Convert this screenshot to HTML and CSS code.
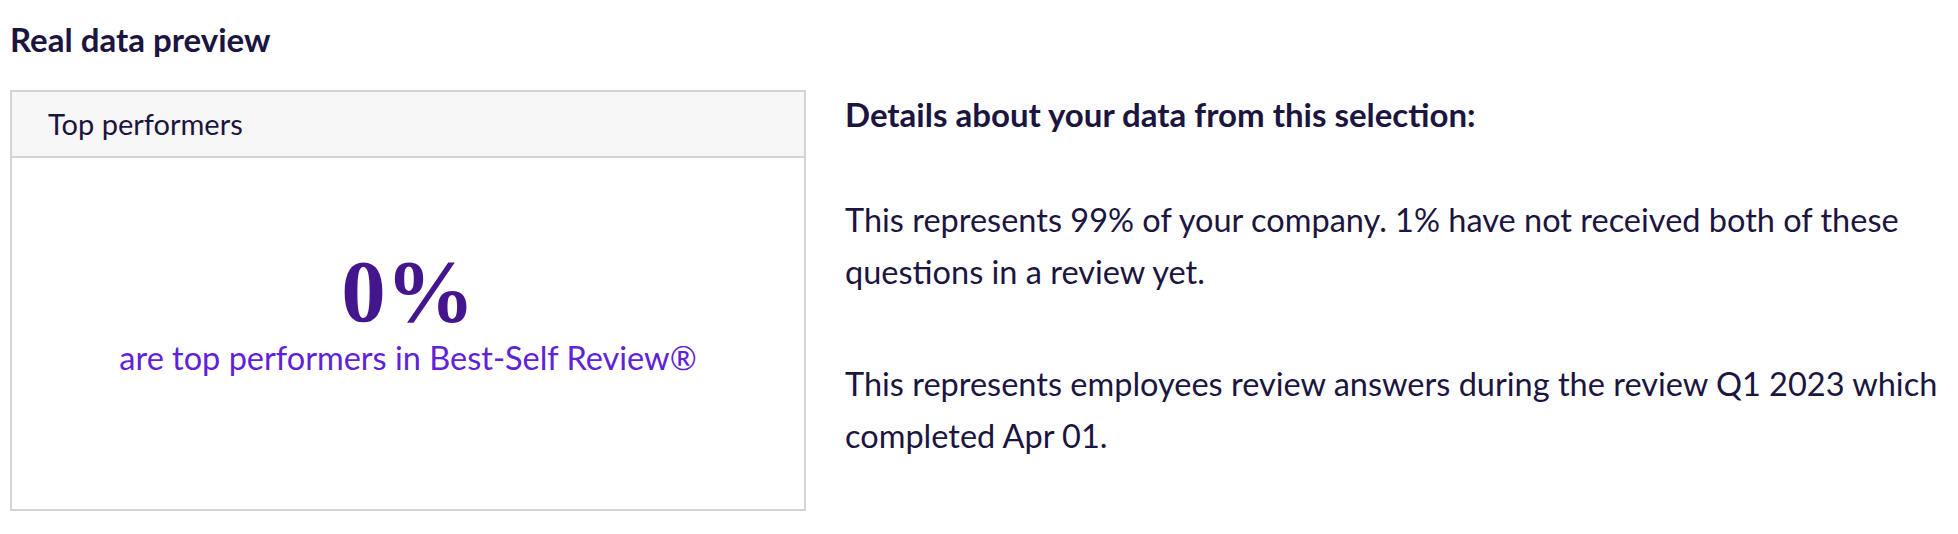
FILE: index.html
```
<!DOCTYPE html>
<html lang="en">
<head>
<meta charset="utf-8">
<title>Real data preview</title>
<link rel="stylesheet" href="styles.css">
</head>
<body>
<main class="page">
  <h2 class="title">Real data preview</h2>
  <div class="row">
    <section class="card">
      <div class="card-header">Top performers</div>
      <div class="card-body">
        <div class="stat">0%</div>
        <div class="stat-label">are top performers in Best-Self Review®</div>
      </div>
    </section>
    <section class="details">
      <h3 class="details-title">Details about your data from this selection:</h3>
      <p class="details-text">This represents 99% of your company. 1% have not received both of these questions in a review yet.</p>
      <p class="details-text">This represents employees review answers during the review Q1 2023 which completed Apr 01.</p>
    </section>
  </div>
</main>
</body>
</html>
```

FILE: styles.css
```
html, body {
  margin: 0;
  padding: 0;
  background: #ffffff;
}

body {
  font-family: Lato, "Noto Sans", sans-serif;
  color: #1b153f;
}

.page {
  padding: 19px 2px 0 10px;
}

.title {
  margin: 0;
  font-size: 33px;
  line-height: 40px;
  font-weight: 700;
  color: #1b153f;
}

.row {
  display: flex;
  align-items: flex-start;
  margin-top: 31px;
}

.card {
  flex: 0 0 796px;
  height: 421px;
  box-sizing: border-box;
  border: 2px solid #d3d3db;
  display: flex;
  flex-direction: column;
}

.card-header {
  height: 66px;
  box-sizing: border-box;
  background: #f7f7f7;
  border-bottom: 2px solid #d3d3db;
  padding-left: 36px;
  font-size: 29px;
  line-height: 64px;
  color: #1b153f;
}

.card-body {
  flex: 1;
  display: flex;
  flex-direction: column;
  align-items: center;
  justify-content: center;
  padding-bottom: 42px;
}

.stat {
  font-family: "Liberation Serif", "DejaVu Serif", serif;
  font-weight: 700;
  font-size: 89px;
  line-height: 90px;
  color: #44168e;
}

.stat-label {
  font-size: 32.5px;
  line-height: 44px;
  color: #5f22d9;
}

.details {
  flex: 1;
  margin-left: 39px;
}

.details-title {
  margin: 0 0 12px 0;
  padding-top: 4px;
  font-size: 33px;
  line-height: 40px;
  font-weight: 700;
  color: #1b153f;
}

.details-text {
  margin: 60px 0 0 0;
  font-size: 32.5px;
  line-height: 52px;
  color: #1b153f;
}
```
